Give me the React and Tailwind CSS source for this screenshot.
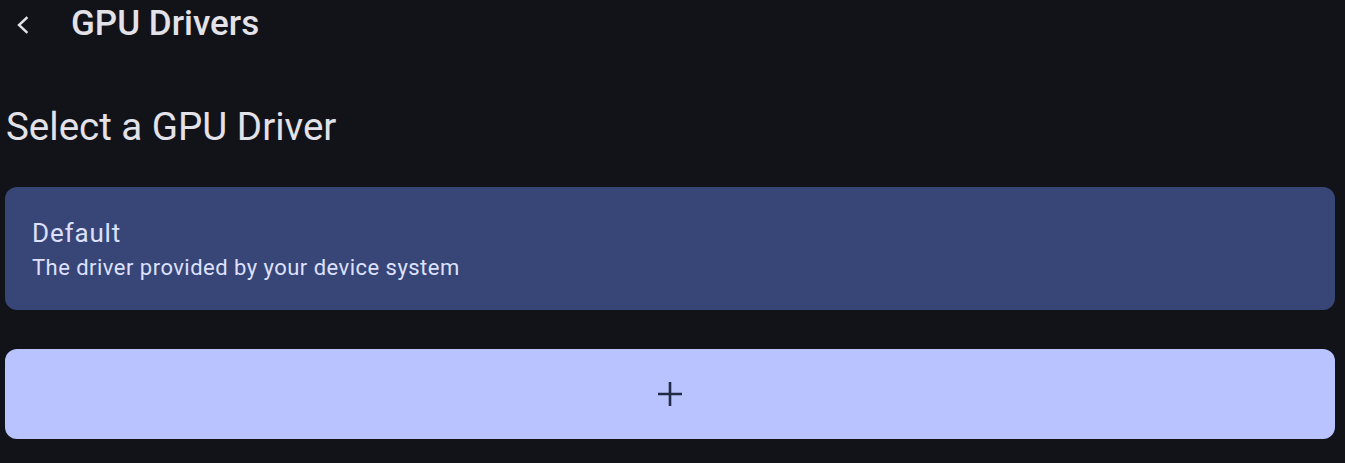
function DriverCard({ title, subtitle }) {
  return (
    <div className="ml-[5px] mr-[10px] h-[123px] rounded-[12px] bg-[#384577] px-[27px] pt-[30px]">
      <div className="text-[26px] leading-[32px] tracking-[0.85px] text-[#dde1ff]">{title}</div>
      <div className="mt-[5px] text-[22px] leading-[28px] tracking-[0.47px] text-[#dde1ff]">{subtitle}</div>
    </div>
  );
}

function AddButton() {
  return (
    <button className="ml-[5px] mr-[10px] mt-[39px] flex h-[90px] w-[calc(100%-15px)] items-center justify-center rounded-[12px] bg-[#b9c3ff]">
      <svg width="24" height="24" viewBox="0 0 24 24">
        <path d="M12 0v24M0 12h24" stroke="#232a45" strokeWidth="2.6" />
      </svg>
    </button>
  );
}

export default function App() {
  return (
    <div className="h-[463px] w-full overflow-hidden bg-[#121318] font-['Roboto',sans-serif]">
      <header className="flex items-start pt-[3px]">
        <svg width="14" height="20" viewBox="0 0 14 20" className="ml-[16px] mt-[12px]">
          <path d="M10.5 3L3 10l7.5 7" fill="none" stroke="#e3e2e9" strokeWidth="2.4" strokeLinecap="square" />
        </svg>
        <h1 className="ml-[41px] text-[35px] font-medium leading-[42px] text-[#e3e2e9]">GPU Drivers</h1>
      </header>
      <h2 className="ml-[6px] mt-[59px] text-[38.5px] leading-[46px] text-[#e3e2e9]">Select a GPU Driver</h2>
      <div className="mt-[37px]">
        <DriverCard title="Default" subtitle="The driver provided by your device system" />
        <AddButton />
      </div>
    </div>
  );
}
